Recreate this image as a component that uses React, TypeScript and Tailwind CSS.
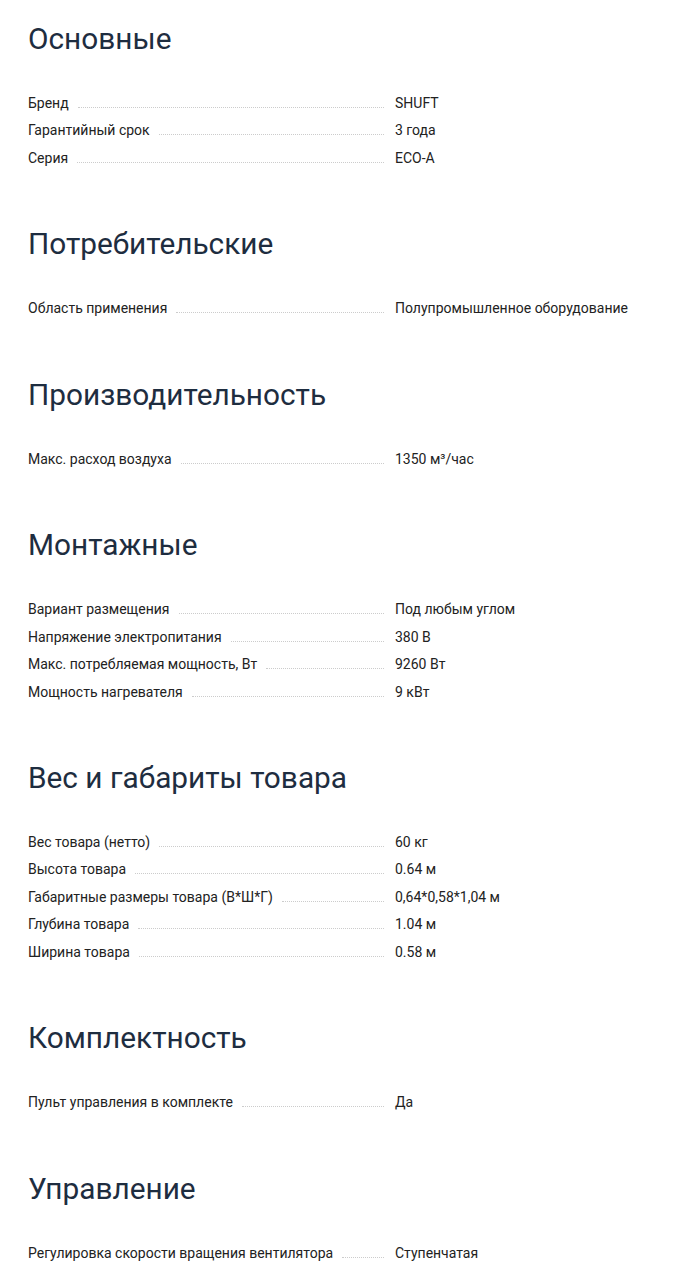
const sections: { title: string; rows: [string, string][] }[] = [
  {
    title: 'Основные',
    rows: [
      ['Бренд', 'SHUFT'],
      ['Гарантийный срок', '3 года'],
      ['Серия', 'ECO-A'],
    ],
  },
  {
    title: 'Потребительские',
    rows: [['Область применения', 'Полупромышленное оборудование']],
  },
  {
    title: 'Производительность',
    rows: [['Макс. расход воздуха', '1350 м³/час']],
  },
  {
    title: 'Монтажные',
    rows: [
      ['Вариант размещения', 'Под любым углом'],
      ['Напряжение электропитания', '380 В'],
      ['Макс. потребляемая мощность, Вт', '9260 Вт'],
      ['Мощность нагревателя', '9 кВт'],
    ],
  },
  {
    title: 'Вес и габариты товара',
    rows: [
      ['Вес товара (нетто)', '60 кг'],
      ['Высота товара', '0.64 м'],
      ['Габаритные размеры товара (В*Ш*Г)', '0,64*0,58*1,04 м'],
      ['Глубина товара', '1.04 м'],
      ['Ширина товара', '0.58 м'],
    ],
  },
  {
    title: 'Комплектность',
    rows: [['Пульт управления в комплекте', 'Да']],
  },
  {
    title: 'Управление',
    rows: [['Регулировка скорости вращения вентилятора', 'Ступенчатая']],
  },
];

function App() {
  return (
    <div className="bg-white min-h-screen px-[28px] pt-[21px] font-['Roboto',sans-serif]">
      {sections.map((section) => (
        <div key={section.title} className="mb-[54px]">
          <h2 className="text-[29.8px] leading-[36px] font-normal text-[#1e2d40] mb-[33px]">
            {section.title}
          </h2>
          <div>
            {section.rows.map(([label, value]) => (
              <div key={label} className="flex items-baseline h-[27.45px] leading-[27.45px] text-[14px] text-[#222]">
                <div className="w-[356px] flex items-baseline shrink-0">
                  <span className="whitespace-nowrap">{label}</span>
                  <span className="flex-1 ml-[9px] h-px border-b border-dotted border-[#cccccc]" />
                </div>
                <span className="ml-[11px] whitespace-nowrap">{value}</span>
              </div>
            ))}
          </div>
        </div>
      ))}
    </div>
  );
}

export default App;
